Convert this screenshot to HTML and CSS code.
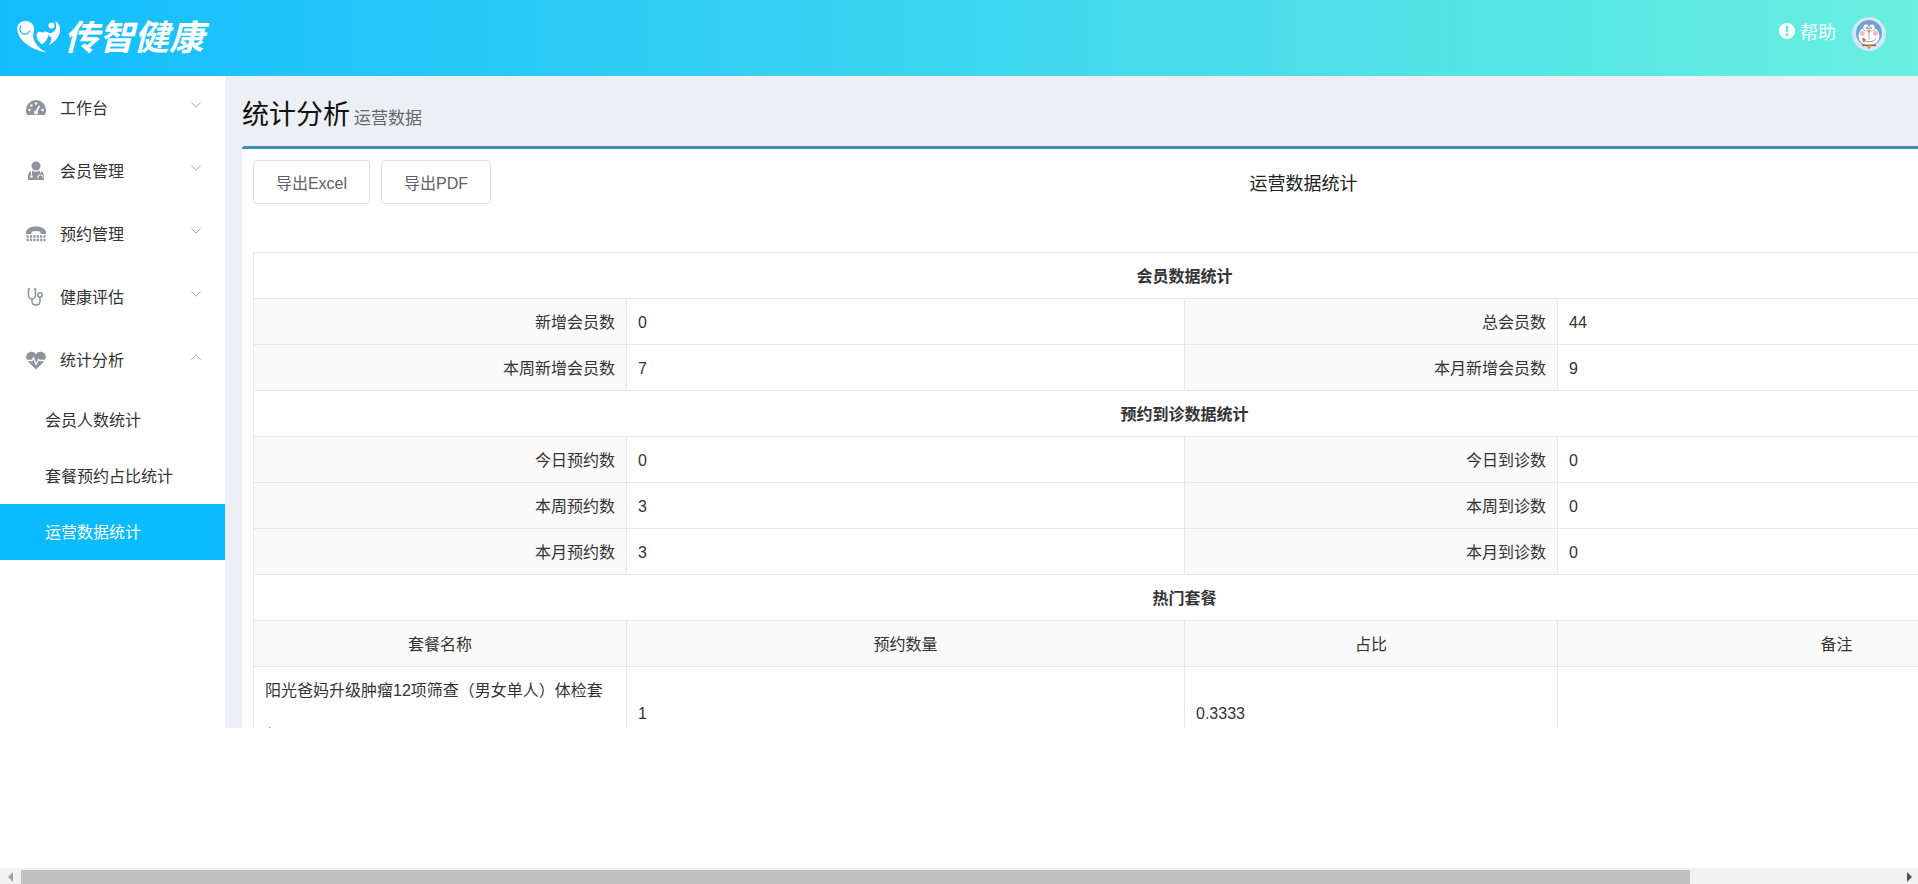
FILE: index.html
```html
<!DOCTYPE html>
<html lang="zh-CN">
<head>
<meta charset="utf-8">
<title>传智健康</title>
<link rel="stylesheet" href="styles.css">
</head>
<body>
<div class="app">
  <header class="topbar">
    <div class="logo">
      <svg class="logo-mark" viewBox="0 0 44 34" width="44" height="34" aria-hidden="true">
        <path fill="#fff" d="M8 1C3 1 0 5 .3 9.500.8 20 14 30 30 32.500c-4-1.500-9-5-12-10.500-1.500-3-2.400-6-1.600-8.500 1.200-3.500 1-6-.4-8.500C14.500 2.500 11.500 1 8 1z"/>
        <path fill="none" stroke="#14bdff" stroke-width="1.300" d="M4.200 5.800a5 5 0 1 0 8.500 4.800"/>
        <path fill="#fff" d="M25 24.500c-3-2.300-5.500-5.500-5.500-9 0-3 3.500-5 6-2.500 2-2.500 5.500-1.500 5.800 1.500.3 3.500-3.300 7.500-6.300 10z"/>
        <path fill="#fff" d="M38 1c3.500 1.500 5.500 5.500 5 10-.6 6-5.500 11.500-11.500 14.500 2-2.300 3-4.800 3-8-2-1-3.800-2.500-5-5.500 1.500.8 3 1.300 4.500 1 2.500-.6 4.500-2.500 5-5 .4-2.300 0-5.300-1-7z"/>
        <circle cx="34.500" cy="5.500" r="3" fill="#fff"/>
        <path fill="none" stroke="#14bdff" stroke-width="1.200" d="M30.500 3.500a5 5 0 0 0 1 6"/>
      </svg>
      <span class="logo-text">传智健康</span>
    </div>
    <div class="topbar-right">
      <span class="help">
        <svg class="help-icon" viewBox="0 0 16 16" width="16" height="16" aria-hidden="true">
          <circle cx="8" cy="8" r="8" fill="#fff"/>
          <rect x="6.700" y="3" width="2.600" height="6.600" rx="1" fill="#5fe6e4"/>
          <circle cx="8" cy="11.800" r="1.500" fill="#5fe6e4"/>
        </svg>
        <span>帮助</span>
      </span>
      <svg class="avatar" viewBox="0 0 34 34" width="34" height="34" aria-hidden="true">
        <circle cx="17" cy="17" r="17" fill="#d4e6f7"/>
        <circle cx="17" cy="16" r="13" fill="#6aa7d6"/>
        <ellipse cx="17" cy="19" rx="10.500" ry="9.500" fill="#fff"/>
        <ellipse cx="14" cy="10.500" rx="3" ry="3.600" fill="#fff" stroke="#777" stroke-width=".5"/>
        <ellipse cx="20" cy="10.500" rx="3" ry="3.600" fill="#fff" stroke="#777" stroke-width=".5"/>
        <circle cx="15" cy="11" r=".8" fill="#444"/>
        <circle cx="19" cy="11" r=".8" fill="#444"/>
        <circle cx="17" cy="14.500" r="1.300" fill="#e07a80"/>
        <circle cx="10.500" cy="16.500" r="2.400" fill="#f5b5b8"/>
        <circle cx="23.500" cy="16.500" r="2.400" fill="#f5b5b8"/>
        <path d="M10 22c3 3.500 11 3.500 14 0" fill="none" stroke="#777" stroke-width=".7"/>
        <path d="M11 20.500c-1 2-.5 4 1 5l2-3z" fill="#e0666e"/>
        <path d="M17 15.500v7" stroke="#777" stroke-width=".6"/>
        <rect x="10" y="27.500" width="14" height="1.600" fill="#b2504f"/>
        <circle cx="17" cy="30" r="1.700" fill="#c9a63a"/>
      </svg>
    </div>
  </header>

  <div class="layout">
    <aside class="sidebar">
      <ul class="menu">
        <li class="menu-item">
          <svg class="menu-icon" viewBox="0 0 20 20" width="20" height="20" aria-hidden="true">
            <path fill="#8f939c" d="M10 2A10 10 0 0 0 0 12c0 2 .4 3.600 1.200 5h17.600c.8-1.400 1.200-3 1.200-5A10 10 0 0 0 10 2z"/>
            <circle cx="10" cy="5.500" r="1.300" fill="#fff"/>
            <circle cx="5.400" cy="7.500" r="1.300" fill="#fff"/>
            <circle cx="3.400" cy="12" r="1.300" fill="#fff"/>
            <circle cx="16.600" cy="12" r="1.300" fill="#fff"/>
            <circle cx="10" cy="14.500" r="2" fill="#fff"/>
            <path d="M10 14l3.500-6" stroke="#fff" stroke-width="1.500"/>
          </svg>
          <span class="menu-label">工作台</span>
          <svg class="chevron" viewBox="0 0 10 6" width="10" height="6" aria-hidden="true"><path d="M.5.500 5 5.200 9.500.500"/></svg>
        </li>
        <li class="menu-item">
          <svg class="menu-icon" viewBox="0 0 20 20" width="20" height="20" aria-hidden="true">
            <circle cx="10" cy="5" r="4.500" fill="#8f939c"/>
            <path fill="#8f939c" d="M2 19v-4c0-3 2-5 4.500-5.200L10 11l3.500-1.200C16 10 18 12 18 15v4z"/>
            <circle cx="5.500" cy="15.500" r="1.300" fill="#fff"/>
            <path d="M5.500 10v4M14.500 10v2M12 17v-2c0-1.500 5-1.500 5 0v2" stroke="#fff" stroke-width="1" fill="none"/>
          </svg>
          <span class="menu-label">会员管理</span>
          <svg class="chevron" viewBox="0 0 10 6" width="10" height="6" aria-hidden="true"><path d="M.5.500 5 5.200 9.500.500"/></svg>
        </li>
        <li class="menu-item">
          <svg class="menu-icon" viewBox="0 0 20 20" width="20" height="20" aria-hidden="true">
            <path fill="#8f939c" d="M0 7.500C2 3.500 6 2.500 10 2.500s8 1 10 5v2.500h-5.500V7.800c-2.500-1-6.500-1-9 0V10H0z"/>
            <path stroke="#8f939c" stroke-width="2.400" stroke-dasharray="2.200 1.200" d="M.5 12.500h19M.5 16h19"/>
          </svg>
          <span class="menu-label">预约管理</span>
          <svg class="chevron" viewBox="0 0 10 6" width="10" height="6" aria-hidden="true"><path d="M.5.500 5 5.200 9.500.500"/></svg>
        </li>
        <li class="menu-item">
          <svg class="menu-icon" viewBox="0 0 20 20" width="20" height="20" aria-hidden="true">
            <path fill="none" stroke="#8f939c" stroke-width="1.500" d="M4 2H2.500v6c0 2.500 2 4 3.500 4s3.500-1.500 3.500-4V2H8M6 12v2.500c0 2 1.500 3.500 4 3.500s4-1.500 4-3.500V9.500"/>
            <circle cx="14" cy="8" r="2.200" fill="none" stroke="#8f939c" stroke-width="1.500"/>
          </svg>
          <span class="menu-label">健康评估</span>
          <svg class="chevron" viewBox="0 0 10 6" width="10" height="6" aria-hidden="true"><path d="M.5.500 5 5.200 9.500.500"/></svg>
        </li>
        <li class="menu-item">
          <svg class="menu-icon" viewBox="0 0 20 20" width="20" height="20" aria-hidden="true">
            <path fill="#8f939c" d="M10 19.500 2 11.500C-.5 9-.3 4.800 2 3c2.500-2 6-1.500 8 1.200C12 1.500 15.500 1 18 3c2.300 1.800 2.500 6 0 8.500z"/>
            <path fill="none" stroke="#fff" stroke-width="1.300" d="M0 10.500h6l1.500-2.500 2.500 6.500 2.500-5 1 1h6.500"/>
          </svg>
          <span class="menu-label">统计分析</span>
          <svg class="chevron" viewBox="0 0 10 6" width="10" height="6" aria-hidden="true"><path d="M.5 5.500 5 .800 9.500 5.500"/></svg>
        </li>
        <li class="submenu-item">会员人数统计</li>
        <li class="submenu-item">套餐预约占比统计</li>
        <li class="submenu-item submenu-item-active">运营数据统计</li>
      </ul>
    </aside>

    <main class="content">
      <h1 class="page-title">统计分析<small class="page-subtitle">运营数据</small></h1>
      <section class="box">
        <div class="toolbar">
          <button class="btn" type="button">导出Excel</button>
          <button class="btn" type="button">导出PDF</button>
          <div class="report-title">运营数据统计</div>
        </div>
        <table class="report">
          <colgroup>
            <col class="col-a"><col class="col-b"><col class="col-a"><col class="col-b">
          </colgroup>
          <tbody>
            <tr><td colspan="4" class="section">会员数据统计</td></tr>
            <tr><td class="label">新增会员数</td><td>0</td><td class="label">总会员数</td><td>44</td></tr>
            <tr><td class="label">本周新增会员数</td><td>7</td><td class="label">本月新增会员数</td><td>9</td></tr>
            <tr><td colspan="4" class="section">预约到诊数据统计</td></tr>
            <tr><td class="label">今日预约数</td><td>0</td><td class="label">今日到诊数</td><td>0</td></tr>
            <tr><td class="label">本周预约数</td><td>3</td><td class="label">本周到诊数</td><td>0</td></tr>
            <tr><td class="label">本月预约数</td><td>3</td><td class="label">本月到诊数</td><td>0</td></tr>
            <tr><td colspan="4" class="section">热门套餐</td></tr>
            <tr class="head-row"><td>套餐名称</td><td>预约数量</td><td>占比</td><td>备注</td></tr>
            <tr><td class="package-name">阳光爸妈升级肿瘤12项筛查（男女单人）体检套餐</td><td>1</td><td>0.3333</td><td></td></tr>
          </tbody>
        </table>
      </section>
    </main>
  </div>
</div>

<div class="scrollbar" aria-hidden="true">
  <span class="scroll-arrow scroll-arrow-left"></span>
  <span class="scroll-track"><span class="scroll-thumb"></span></span>
  <span class="scroll-arrow scroll-arrow-right"></span>
</div>
</body>
</html>
```
FILE: styles.css
```css
* { box-sizing: border-box; }
html, body { margin: 0; height: 100%; overflow: hidden; background: #fff; }
body {
  font-family: "Liberation Sans", "Noto Sans CJK SC", sans-serif;
  color: #333;
  font-size: 16px;
}
.app { width: 1918px; height: 884px; overflow: hidden; }

.topbar {
  height: 76px;
  display: flex;
  align-items: center;
  justify-content: space-between;
  background: linear-gradient(to right, #12bcff, #68f0e0);
  padding: 0 32px 8px 17px;
}
.logo { display: flex; align-items: center; gap: 6px; }
.logo-mark { display: block; margin-top: 5px; }
.logo-text {
  font-size: 35px;
  line-height: 40px;
  font-weight: 700;
  font-style: italic;
  color: #fff;
  margin-top: 8px;
  margin-left: -3px;
}
.topbar-right { display: flex; align-items: center; gap: 16px; color: #fff; font-size: 18px; }
.help { display: flex; align-items: center; gap: 5px; margin-top: -6px; }
.help-icon { display: block; }
.avatar { display: block; }

.layout { display: flex; height: 652px; overflow: hidden; }
.sidebar { flex: 0 0 225px; background: #fff; padding-top: 1px; }
.menu { list-style: none; margin: 0; padding: 0; }
.menu-item {
  height: 63px;
  display: flex;
  align-items: center;
  padding-left: 26px;
  color: #333;
  position: relative;
}
.menu-icon { flex: none; display: block; margin-top: -2px; }
.menu-label { margin-left: 14px; margin-top: -3px; }
.chevron {
  position: absolute;
  left: 191px;
  top: 25px;
  fill: none;
  stroke: #a6abb5;
  stroke-width: 1;
}
.submenu-item {
  height: 56px;
  line-height: 58px;
  padding-left: 45px;
  color: #333;
}
.submenu-item-active { background: #0abbff; color: #fff; }

.content { flex: 0 0 1940px; background: #ecf0f5; padding: 0 17px; }
.page-title {
  margin: 0;
  height: 70px;
  display: flex;
  align-items: baseline;
  padding-top: 19px;
  font-size: 27px;
  line-height: 40px;
  font-weight: 400;
  color: #111;
}
.page-subtitle { font-size: 17px; color: #666; margin-left: 4px; }

.box {
  width: 1885px;
  background: #fff;
  border-top: 3px solid #3c8dbc;
  border-radius: 3px;
  padding: 11px;
}
.toolbar { display: flex; align-items: center; height: 44px; margin-bottom: 48px; }
.btn {
  width: 117px;
  height: 44px;
  padding: 0;
  margin-right: 11px;
  background: #fff;
  border: 1px solid #dcdfe6;
  border-radius: 4px;
  color: #606266;
  font: inherit;
}
.btn + .btn { width: 110px; margin-right: 0; }
.report-title { flex: 1; text-align: center; font-size: 18px; color: #222; }

.report { width: 1863px; table-layout: fixed; border-collapse: collapse; }
.col-a { width: 373px; }
.col-b { width: 558px; }
.report td {
  border: 1px solid #e7e7e7;
  padding: 2px 11px 0;
  line-height: 43px;
  color: #333;
}
.report .package-name { padding-top: 1px; line-height: 45px; }
.report .section { text-align: center; font-weight: 700; }
.report .label { text-align: right; background: #fafafa; }
.head-row td { text-align: center; background: #fafafa; }

.scrollbar {
  position: fixed;
  left: 0;
  right: 0;
  bottom: 0;
  height: 16px;
  background: #f1f1f1;
  display: flex;
  align-items: flex-end;
}
.scroll-arrow { flex: 0 0 21px; height: 14px; position: relative; }
.scroll-arrow-right { flex-basis: 17px; }
.scroll-arrow::before {
  content: "";
  position: absolute;
  top: 2px;
  border-style: solid;
  border-width: 5px 0;
  border-color: transparent;
}
.scroll-arrow-left::before { left: 8px; border-right: 5px solid #a3a3a3; }
.scroll-arrow-right::before { left: 6px; border-left: 5px solid #505050; }
.scroll-track { flex: 1; height: 14px; display: block; }
.scroll-thumb { display: block; width: 1669px; height: 14px; background: #c1c1c1; }
```
